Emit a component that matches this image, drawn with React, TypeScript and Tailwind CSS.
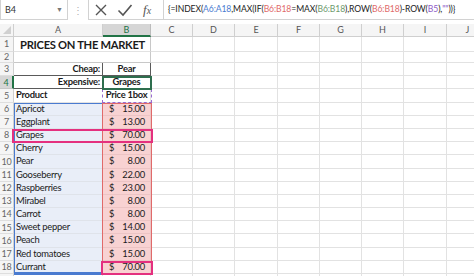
import React from "react";

type Cell = { text?: React.ReactNode; cls: string };

const FONT = "font-['Lato','Carlito','Liberation_Sans',sans-serif]";
const EXTRA = ["C", "D", "E", "F", "G", "H", "I", "J"];
const EXTRA_W = ["w-[42px]", "w-[42px]", "w-[43px]", "w-[42px]", "w-[42px]", "w-[42px]", "w-[43px]", "w-[42px]"];
const GRID = "border-r border-b border-[#e2e2e2]";
const TXT = "text-[9.4px] tracking-[-0.25px]";

const PRODUCTS: [string, string][] = [
  ["Apricot", "15.00"], ["Eggplant", "13.00"], ["Grapes", "70.00"], ["Cherry", "15.00"],
  ["Pear", "8.00"], ["Gooseberry", "22.00"], ["Raspberries", "23.00"], ["Mirabel", "8.00"],
  ["Carrot", "8.00"], ["Sweet pepper", "14.00"], ["Peach", "15.00"], ["Red tomatoes", "15.00"],
  ["Currant", "70.00"],
];

function Price({ v }: { v: string }) {
  return (
    <span className="flex w-full justify-between pl-[6px] pr-[5px]">
      <span>$</span>
      <span>{v}</span>
    </span>
  );
}

function Row({ n, h, cells, sel }: { n: number; h: string; cells: Cell[]; sel?: boolean }) {
  return (
    <div className={`flex ${h}`}>
      <div
        className={`w-[14px] shrink-0 flex items-center justify-center text-[9px] tracking-[-0.3px] border-b ${
          sel
            ? "bg-[#d6d6d6] text-[#217346] border-r-2 border-r-[#217346] border-b-[#c6c6c6]"
            : "bg-[#f5f5f5] text-[#666] border-r border-r-[#cfcfcf] border-b-[#dedede]"
        }`}
      >
        {n}
      </div>
      {cells.map((c, i) => (
        <div key={i} className={`shrink-0 flex items-center overflow-hidden whitespace-nowrap ${c.cls}`}>
          {c.text}
        </div>
      ))}
      {EXTRA.map((c, i) => (
        <div key={c} className={`shrink-0 ${EXTRA_W[i]} ${GRID}`} />
      ))}
    </div>
  );
}

const ref = (t: string, c: string) => <span className={c}>{t}</span>;

export default function App() {
  const dark = "border-[#5a5a5a]";
  return (
    <div className={`w-[474px] h-[276px] overflow-hidden bg-white text-[#1b1b1b] ${FONT}`}>
      {/* formula bar */}
      <div className="flex h-[20px] items-stretch">
        <div className="w-[68px] shrink-0 border border-t-0 border-[#d2d2d2] flex items-center justify-between pl-[4px] pr-[4px] text-[9px] text-[#333]">
          <span>B4</span>
          <span className="text-[7px] text-[#777]">▼</span>
        </div>
        <div className="w-[20px] shrink-0 flex items-center justify-center text-[#b0b0b0] text-[10px]">⋮</div>
        <div className="w-[75px] shrink-0 border border-t-0 border-r-0 border-[#d2d2d2] flex items-center">
          <svg width="14" height="14" viewBox="0 0 14 14" className="ml-[5px]">
            <path d="M2 2 L12 12 M12 2 L2 12" stroke="#555" strokeWidth="1.4" fill="none" />
          </svg>
          <svg width="16" height="14" viewBox="0 0 16 14" className="ml-[9px]">
            <path d="M1.5 7.5 L6 12 L14.5 2" stroke="#555" strokeWidth="1.6" fill="none" />
          </svg>
          <span className="ml-[10px] font-['Liberation_Serif',serif] italic text-[13px] text-[#555] leading-none">
            f<span className="text-[10px]">x</span>
          </span>
        </div>
        <div className="flex-1 border border-t-0 border-r-0 border-[#d2d2d2] flex items-center pl-[4px] text-[8.6px] tracking-[-0.1px] whitespace-nowrap overflow-hidden text-[#222]">
          {"{=INDEX("}
          {ref("A6:A18", "text-[#4a7bd0]")}
          {",MAX(IF("}
          {ref("B6:B18", "text-[#e06a6a]")}
          {"=MAX("}
          {ref("B6:B18", "text-[#6d9a6d]")}
          {"),ROW("}
          {ref("B6:B18", "text-[#e06a6a]")}
          {")-ROW("}
          {ref("B5", "text-[#8e5cc8]")}
          {"),"}
          {ref('""', "text-[#8e5cc8]")}
          {"))}"}
        </div>
      </div>

      <div className="h-[4px]" />

      {/* sheet */}
      <div className="relative">
        {/* column headers */}
        <div className="flex h-[13px] text-[9px] text-[#555]">
          <div className="w-[14px] shrink-0 bg-[#f5f5f5] border-r border-b border-[#cfcfcf] relative">
            <svg width="8" height="8" viewBox="0 0 8 8" className="absolute right-[2px] bottom-[2px]">
              <path d="M8 0 L8 8 L0 8 Z" fill="#d0d0d0" />
            </svg>
          </div>
          <div className="w-[89px] shrink-0 bg-[#f5f5f5] border-r border-b border-[#cfcfcf] flex items-center justify-center">A</div>
          <div className="w-[48px] shrink-0 bg-[#d6d6d6] border-r border-r-[#bcbcbc] border-b-2 border-b-[#217346] text-[#217346] flex items-center justify-center">B</div>
          {EXTRA.map((c, i) => (
            <div key={c} className={`${EXTRA_W[i]} shrink-0 bg-[#f5f5f5] border-r border-b border-[#cfcfcf] flex items-center justify-center`}>
              {c}
            </div>
          ))}
        </div>

        <Row n={1} h="h-[15px]" cells={[{ text: "PRICES ON THE MARKET", cls: `w-[137px] pl-[6px] pt-[2px] font-bold text-[11.2px] tracking-[-0.3px] border-r border-[#c8c8c8] border-b border-b-[#e2e2e2]` }]} />
        <Row n={2} h="h-[11px]" cells={[{ cls: `w-[137px] border-r border-[#c8c8c8] border-b ${dark}` }]} />
        <Row n={3} h="h-[13.2px]" cells={[
          { text: "Cheap:", cls: `w-[89px] justify-end pr-[2px] font-bold ${TXT} border-r border-b ${dark}` },
          { text: "Pear", cls: `w-[48px] justify-center font-bold ${TXT} border-r border-b ${dark}` },
        ]} />
        <Row n={4} sel h="h-[13.2px]" cells={[
          { text: "Expensive:", cls: `w-[89px] justify-end pr-[2px] font-bold ${TXT} border-r border-b ${dark}` },
          { text: "Grapes", cls: `w-[48px] justify-center font-bold ${TXT} border-r border-b ${dark}` },
        ]} />
        <Row n={5} h="h-[13.2px]" cells={[
          { text: "Product", cls: `w-[89px] pl-[2px] font-bold ${TXT} border-b border-[#e2e2e2]` },
          { text: "Price 1box", cls: `w-[48px] justify-center font-bold ${TXT} ${GRID}` },
        ]} />
        {PRODUCTS.map(([p, v], i) => (
          <Row key={p + i} n={i + 6} h="h-[13.2px]" cells={[
            { text: p, cls: `w-[89px] pl-[2px] ${TXT} bg-[#e9eef8] border-r border-b border-[#dfe3ea]` },
            { text: <Price v={v} />, cls: `w-[48px] ${TXT} bg-[#f8d2d2] border-r border-b border-[#ecc4c4]` },
          ]} />
        ))}
        <Row n={19} h="h-[13.2px]" cells={[
          { cls: `w-[89px] ${GRID}` },
          { cls: `w-[48px] ${GRID}` },
        ]} />

        {/* range highlights */}
        <div className="absolute left-[14px] top-[78.6px] w-[89px] h-[172.6px] border border-[#4a7bd0] border-b-[3px] pointer-events-none" />
        <div className="absolute left-[102px] top-[78.6px] w-[50px] h-[172.6px] border border-[#e06a6a] border-b-[2px] pointer-events-none" />
        <div className="absolute left-[102px] top-[65.4px] w-[50px] h-[14px] border border-dashed border-[#9a6ad0] pointer-events-none" />
        <div className="absolute left-[102px] top-[52.2px] w-[50px] h-[14px] border-2 border-[#2e6e4e] pointer-events-none" />
        {/* marks */}
        <div className="absolute left-[12px] top-[104.5px] w-[141px] h-[14.2px] border-2 border-[#e4307f] pointer-events-none" />
        <div className="absolute left-[101px] top-[236.5px] w-[52px] h-[14.2px] border-2 border-[#e4307f] pointer-events-none" />
      </div>
    </div>
  );
}
